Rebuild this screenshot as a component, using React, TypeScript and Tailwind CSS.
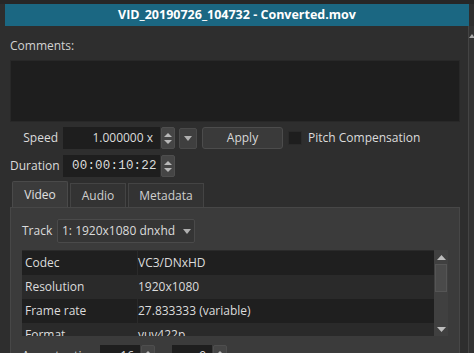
import React from 'react';

const font = { fontFamily: '"Open Sans", "Noto Sans", sans-serif' };

function SpinArrows({ both = true }: { both?: boolean }) {
  return (
    <div className="w-[14px] h-full rounded-[2px] bg-[#454545] border border-[#4e4e4e] flex flex-col items-center justify-center gap-[3px]">
      <svg width="8" height="4" viewBox="0 0 8 4"><path d="M0 4 L4 0 L8 4 Z" fill="#b8b8b8" /></svg>
      {both && <svg width="8" height="4" viewBox="0 0 8 4"><path d="M0 0 L4 4 L8 0 Z" fill="#b8b8b8" /></svg>}
    </div>
  );
}

function Caret() {
  return (
    <svg width="8" height="5" viewBox="0 0 8 5"><path d="M0 0 L4 5 L8 0 Z" fill="#b0b0b0" /></svg>
  );
}

export default function App() {
  const rows = [
    ['Codec', 'VC3/DNxHD'],
    ['Resolution', '1920x1080'],
    ['Frame rate', '27.833333 (variable)'],
    ['Format', 'yuv422p'],
  ];

  return (
    <div className="w-[474px] h-[353px] overflow-hidden bg-[#2e2e2e] text-[#dcdcdc] text-[12px] leading-none whitespace-nowrap" style={font}>
      <div className="h-[4px] bg-[#272727]" />
      <div className="mx-[5px] h-[22px] bg-[#1b6782] flex items-center justify-center text-white font-bold text-[12.5px]">
        VID_20190726_104732 - Converted.mov
      </div>

      <div className="flex h-[327px] overflow-hidden">
        <div className="flex-1 pl-[10px] pr-[8px]">
          <div className="pt-[14px] h-[34px] text-[#d2d2d2]">Comments:</div>
          <div className="w-[450px] h-[62px] bg-[#1e1e1e] border border-[#282828]" />

          <div className="mt-[5px] flex items-center h-[22px]">
            <div className="w-[48px] text-right">Speed</div>
            <div className="ml-[5px] h-[22px] flex items-stretch gap-[1px]">
              <div className="w-[97px] bg-[#1e1e1e] flex items-center justify-end pr-[7px]">1.000000 x</div>
              <SpinArrows />
            </div>
            <div className="ml-[4px] w-[18px] h-[21px] rounded-[2px] bg-[#3f3f3f] border border-[#4a4a4a] flex items-center justify-center">
              <Caret />
            </div>
            <div className="ml-[5px] w-[81px] h-[22px] rounded-[3px] bg-[#3a3a3a] border border-[#4c4c4c] flex items-center justify-center text-[#d8d8d8]">
              Apply
            </div>
            <div className="ml-[5px] w-[14px] h-[14px] bg-[#1e1e1e] border border-[#2a2a2a]" />
            <div className="ml-[6px]">Pitch Compensation</div>
          </div>

          <div className="mt-[6px] flex items-center h-[22px]">
            <div className="w-[48px] text-right">Duration</div>
            <div className="ml-[5px] h-[22px] flex items-stretch gap-[1px]">
              <div className="w-[97px] bg-[#1e1e1e] flex items-center pl-[9px] text-[12.5px] tracking-[0.2px]" style={{ fontFamily: '"Liberation Mono", monospace' }}>
                00:00:10:22
              </div>
              <SpinArrows />
            </div>
          </div>

          <div className="mt-[4px] flex items-end h-[26px] pl-[2px]">
            <div className="w-[56px] h-[26px] bg-[#3b3b3b] border border-b-0 border-[#4a4a4a] rounded-t-[2px] flex items-center justify-center text-[#e0e0e0]">Video</div>
            <div className="ml-[2px] w-[56px] h-[24px] bg-[#333333] border border-b-0 border-[#444444] flex items-center justify-center text-[#cfcfcf]">Audio</div>
            <div className="ml-[2px] w-[76px] h-[24px] bg-[#333333] border border-b-0 border-[#444444] flex items-center justify-center text-[#cfcfcf]">Metadata</div>
          </div>
          <div className="w-[450px] h-[160px] bg-[#3b3b3b] border border-[#474747] pl-[11px] pt-[11px]">
            <div className="flex items-center h-[24px]">
              <div className="w-[35px]">Track</div>
              <div className="w-[138px] h-[24px] rounded-[2px] bg-[#353535] border border-[#4a4a4a] flex items-center pl-[4px] gap-[8px]">
                <span>1: 1920x1080 dnxhd</span>
                <Caret />
              </div>
            </div>
            <div className="mt-[7px] flex h-[86px]">
              <div className="w-[412px] bg-[#1e1e1e] overflow-hidden border-t border-[#2a2a2a]">
                {rows.map(([k, v], i) => (
                  <div key={k} className={`h-[24px] flex items-center ${i % 2 === 1 ? 'bg-[#2a2a2a]' : 'bg-[#1f1f1f]'}`}>
                    <div className="w-[116px] pl-[3px] border-r border-[#2a2a2a] h-full flex items-center">{k}</div>
                    <div>{v}</div>
                  </div>
                ))}
              </div>
              <div className="w-[14px] bg-[#404040] flex flex-col items-center">
                <div className="h-[14px] flex items-center justify-center"><svg width="9" height="5" viewBox="0 0 9 5"><path d="M0 5 L4.5 0 L9 5 Z" fill="#bdbdbd" /></svg></div>
                <div className="w-[12px] h-[28px] bg-[#4a4a4a] border border-[#555]" />
                <div className="flex-1" />
                <div className="h-[14px] flex items-center justify-center"><svg width="9" height="5" viewBox="0 0 9 5"><path d="M0 0 L4.5 5 L9 0 Z" fill="#bdbdbd" /></svg></div>
              </div>
            </div>
            <div className="mt-[9px] flex items-start h-[22px]">
              <div className="w-[78px] pt-[5px]">Aspect ratio</div>
              <div className="h-[22px] flex items-stretch gap-[1px]">
                <div className="w-[40px] bg-[#1e1e1e] flex items-center justify-end pr-[6px]">16</div>
                <SpinArrows />
              </div>
              <div className="ml-[17px] h-[22px] flex items-stretch gap-[1px]">
                <div className="w-[40px] bg-[#1e1e1e] flex items-center justify-end pr-[6px]">9</div>
                <SpinArrows />
              </div>
            </div>
          </div>
        </div>
        <div className="w-[7px] border-l border-[#444] bg-[#333] flex flex-col items-center pt-[8px]">
          <svg width="6" height="4" viewBox="0 0 6 4"><path d="M0 4 L3 0 L6 4 Z" fill="#aaa" /></svg>
        </div>
      </div>
    </div>
  );
}
